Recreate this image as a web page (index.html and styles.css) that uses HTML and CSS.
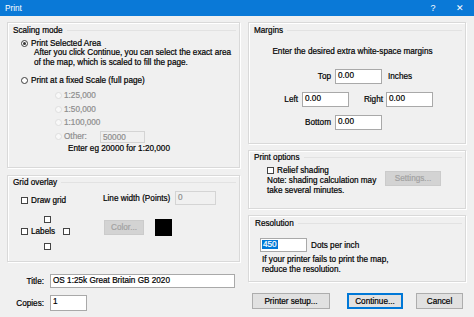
FILE: index.html
```html
<!DOCTYPE html>
<html lang="en">
<head>
  <meta charset="UTF-8" />
  <title>Print</title>
  <link rel="stylesheet" href="styles.css">
</head>
<body>
  <div class="window">
    <div class="titlebar">
      <span class="name">Print</span>
      <span class="tb-btn help">?</span>
      <span class="tb-btn close">✕</span>
    </div>

    <div class="content">
      <!-- left column -->
      <div class="col left-col">
        <div class="group scaling">
          <div class="group-title">Scaling mode</div>
          <div class="radio-row main-radio"><span class="radio checked"></span>Print Selected Area</div>
          <div class="desc">After you click Continue, you can select the exact area<br>of the map, which is scaled to fill the page.</div>
          <div class="radio-row main-radio second"><span class="radio"></span>Print at a fixed Scale (full page)</div>
          <div class="scales">
            <div class="radio-row sub-radio"><span class="radio disabled"></span>1:25,000</div>
            <div class="radio-row sub-radio"><span class="radio disabled"></span>1:50,000</div>
            <div class="radio-row sub-radio"><span class="radio disabled"></span>1:100,000</div>
            <div class="radio-row sub-radio"><span class="radio disabled"></span><span class="other-label">Other:</span><div class="field disabled other-field">50000</div></div>
          </div>
          <div class="hint">Enter eg 20000 for 1:20,000</div>
        </div>

        <div class="group grid-group">
          <div class="group-title">Grid overlay</div>
          <div class="grid-body">
            <div class="grid-left">
              <div class="check-row draw-grid"><span class="check"></span>Draw grid</div>
              <div class="labels-cluster">
                <div class="cluster-row top"><span class="check"></span></div>
                <div class="cluster-row middle"><span class="check"></span><span class="labels-text">Labels</span><span class="check"></span></div>
                <div class="cluster-row bottom"><span class="check"></span></div>
              </div>
            </div>
            <div class="grid-right">
              <div class="linewidth-row">
                <span class="linewidth-label">Line width (Points)</span>
                <div class="field disabled linewidth-field">0</div>
              </div>
              <div class="color-row">
                <button class="btn disabled color-btn">Color...</button>
                <span class="swatch"></span>
              </div>
            </div>
          </div>
        </div>

        <div class="form-row title-row">
          <span class="form-label">Title:</span>
          <div class="field title-field">OS 1:25k Great Britain GB 2020</div>
        </div>
        <div class="form-row copies-row">
          <span class="form-label">Copies:</span>
          <div class="field copies-field">1</div>
        </div>
      </div>

      <!-- right column -->
      <div class="col right-col">
        <div class="group margins">
          <div class="group-title">Margins</div>
          <div class="margins-desc">Enter the desired extra white-space margins</div>
          <div class="mrow top-row">
            <span class="mlabel">Top</span>
            <div class="field mfield">0.00</div>
            <span class="unit">Inches</span>
          </div>
          <div class="mrow side-row">
            <span class="mlabel">Left</span>
            <div class="field mfield">0.00</div>
            <span class="mlabel right-label">Right</span>
            <div class="field mfield">0.00</div>
          </div>
          <div class="mrow bottom-row">
            <span class="mlabel">Bottom</span>
            <div class="field mfield">0.00</div>
          </div>
        </div>

        <div class="group options">
          <div class="group-title">Print options</div>
          <div class="options-body">
            <div class="options-left">
              <div class="check-row"><span class="check"></span>Relief shading</div>
              <div class="note">Note: shading calculation may<br>take several minutes.</div>
            </div>
            <button class="btn disabled settings-btn">Settings...</button>
          </div>
        </div>

        <div class="group resolution">
          <div class="group-title">Resolution</div>
          <div class="res-row">
            <div class="field res-field"><span class="selected">450</span></div>
            <span class="unit">Dots per inch</span>
          </div>
          <div class="note res-note">If your printer fails to print the map,<br>reduce the resolution.</div>
        </div>

        <div class="buttons">
          <button class="btn setup-btn">Printer setup...</button>
          <button class="btn default continue-btn">Continue...</button>
          <button class="btn cancel-btn">Cancel</button>
        </div>
      </div>
    </div>
  </div>
</body>
</html>
```

FILE: styles.css
```css
* {
  box-sizing: border-box;
}

body {
  margin: 0;
  font-family: "Liberation Sans", Arial, sans-serif;
  font-size: 8.2px;
  color: #000;
  background: #f0f0f0;
  -webkit-text-stroke-width: 0.2px;
}

.window {
  width: 474px;
  height: 317px;
  background: #f0f0f0;
  display: flex;
  flex-direction: column;
  overflow: hidden;
}

/* title bar */
.titlebar {
  height: 16px;
  background: #0a79d7;
  color: #fff;
  display: flex;
  align-items: center;
  padding-left: 5px;
  -webkit-text-stroke-width: 0;
}

.titlebar .name {
  flex: 1;
}

.tb-btn {
  text-align: center;
  font-size: 9px;
}

.help {
  width: 26px;
}

.close {
  width: 28px;
}

.content {
  display: flex;
  gap: 8px;
  padding: 6px 0 0 7px;
}

.col {
  display: flex;
  flex-direction: column;
}

.left-col {
  width: 233px;
}

.right-col {
  width: 218px;
}

/* group boxes */
.group {
  border: 1px solid #d9d9d9;
  box-shadow: inset 1px 1px 0 #fff, 1px 1px 0 #fff;
  display: flex;
  flex-direction: column;
}

.group-title {
  height: 15px;
  display: flex;
  align-items: center;
  padding-left: 5px;
}

.group-title::after {
  content: "";
  flex: 1;
  margin: 0 3px 0 4px;
  border-top: 1px solid #e2e2e2;
}

/* radios and checkboxes */
.radio {
  width: 7px;
  height: 7px;
  border: 1px solid #3c3c3c;
  border-radius: 50%;
  background: #fff;
  margin-right: 3px;
  position: relative;
  flex: none;
}

.radio.checked::after {
  content: "";
  position: absolute;
  left: 1px;
  top: 1px;
  width: 3px;
  height: 3px;
  border-radius: 50%;
  background: #333;
}

.radio.disabled {
  border-color: #dedede;
  background: #f8f8f8;
  margin-right: 2px;
}

.check {
  width: 7px;
  height: 7px;
  border: 1px solid #444;
  background: #fff;
  flex: none;
}

.radio-row,
.check-row {
  display: flex;
  align-items: center;
}

/* scaling mode */
.scaling {
  height: 146px;
}

.main-radio {
  height: 10px;
  padding-left: 13px;
}

.main-radio.second {
  margin-top: 7px;
  height: 12px;
}

.desc {
  line-height: 9.5px;
  padding-left: 26px;
}

.scales {
  margin-top: 3px;
}

.sub-radio {
  height: 13.6px;
  padding-left: 47px;
  color: #8e8e8e;
}

.other-label {
  width: 36px;
}

.hint {
  height: 12px;
  line-height: 12px;
  padding-left: 60px;
}

/* fields */
.field {
  background: #fff;
  border: 1px solid #a9a9a9;
  padding: 1px 2px 0;
  line-height: 9px;
  white-space: nowrap;
  overflow: hidden;
}

.field.disabled {
  background: #f0f0f0;
  border-color: #d4d4d4;
  color: #8e8e8e;
}

.other-field {
  width: 45px;
  height: 12px;
}

/* grid overlay */
.grid-group {
  margin-top: 7px;
  height: 87px;
}

.grid-group .group-title {
  height: 13px;
}

.grid-body {
  display: flex;
}

.grid-left {
  width: 95px;
  padding-left: 13px;
}

.draw-grid {
  margin-top: 4px;
  height: 14px;
}

.draw-grid .check {
  margin-right: 3px;
}

.labels-cluster {
  margin-top: 6px;
}

.cluster-row {
  display: flex;
  align-items: center;
}

.cluster-row.top,
.cluster-row.bottom {
  padding-left: 23px;
  height: 12px;
}

.cluster-row.middle {
  height: 13px;
}

.cluster-row.bottom {
  margin-top: 2px;
  height: 13px;
}

.labels-text {
  margin: 0 8px 0 3px;
}

.grid-right {
  flex: 1;
}

.linewidth-row {
  display: flex;
  align-items: center;
  margin-top: 2px;
  height: 14px;
}

.linewidth-label {
  width: 72px;
}

.linewidth-field {
  width: 41px;
  height: 14px;
}

.color-row {
  display: flex;
  align-items: center;
  margin-top: 14px;
}

.swatch {
  width: 17px;
  height: 17px;
  background: #000;
  margin-left: 11px;
}

/* buttons */
.btn {
  font-family: inherit;
  font-size: 8.2px;
  color: #000;
  background: #e1e1e1;
  border: 1px solid #adadad;
  padding: 0;
  height: 16px;
}

.btn.disabled {
  background: #d3d3d3;
  border-color: #cbcbcb;
  color: #a2a2a2;
}

.btn.default {
  border-color: #0078d7;
  box-shadow: inset 0 0 0 1px #0078d7;
}

.color-btn {
  width: 40px;
  height: 15px;
  margin-left: 1px;
}

/* title and copies */
.form-row {
  display: flex;
  align-items: center;
}

.form-label {
  width: 37px;
  text-align: right;
  margin-right: 6px;
}

.title-row {
  margin-top: 12px;
}

.title-field {
  width: 185px;
  height: 14px;
}

.copies-row {
  margin-top: 7px;
}

.copies-field {
  width: 37px;
  height: 16px;
}

/* margins */
.margins {
  height: 122px;
}

.margins-desc {
  margin-top: 8px;
  height: 12px;
  line-height: 12px;
  text-align: center;
  padding-right: 9px;
}

.mrow {
  display: flex;
  align-items: center;
  margin-top: 8px;
  height: 15px;
  padding-left: 52px;
}

.mrow.top-row {
  margin-top: 11px;
}

.mrow.side-row {
  padding-left: 19px;
}

.mlabel {
  width: 30px;
  text-align: right;
  margin-right: 4px;
}

.mlabel.right-label {
  width: 34px;
  margin-right: 3px;
}

.mfield {
  width: 47px;
  height: 15px;
}

.unit {
  margin-left: 6px;
}

/* print options */
.options {
  margin-top: 6px;
  height: 59px;
}

.options .group-title {
  height: 13px;
}

.options-body {
  display: flex;
  align-items: flex-start;
}

.options-left {
  width: 136px;
  padding-left: 18px;
}

.options-left .check-row {
  height: 12px;
}

.options-left .check {
  margin-right: 3px;
}

.note {
  line-height: 10px;
}

.settings-btn {
  margin-top: 7px;
  width: 56px;
  height: 15px;
}

/* resolution */
.resolution {
  margin-top: 6px;
  height: 67px;
}

.resolution .group-title {
  padding-left: 6px;
}

.res-row {
  display: flex;
  align-items: center;
  margin-top: 7px;
  padding-left: 11px;
}

.res-field {
  width: 47px;
  height: 14px;
  padding-left: 1px;
}

.res-field .selected {
  background: #0078d7;
  color: #fff;
  padding: 0 1px;
}

.res-row .unit {
  margin-left: 4px;
}

.res-note {
  margin-top: 3px;
  padding-left: 13px;
}

/* dialog buttons */
.buttons {
  display: flex;
  margin-top: 11px;
  padding-left: 4px;
}

.setup-btn {
  width: 78px;
}

.continue-btn {
  width: 56px;
  margin-left: 17px;
}

.cancel-btn {
  width: 47px;
  margin-left: 13px;
}
```
